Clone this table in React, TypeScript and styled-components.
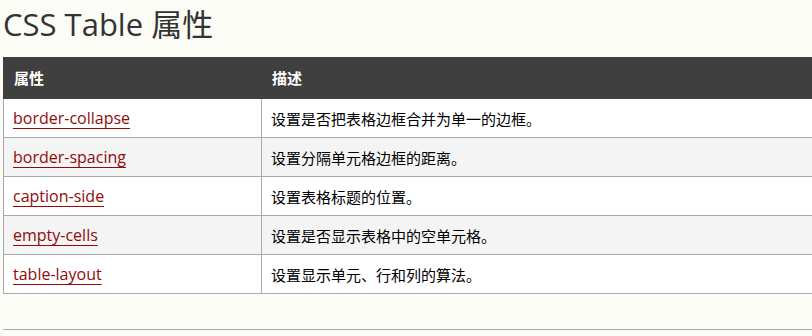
import React from 'react';
import styled, { createGlobalStyle } from 'styled-components';

const GlobalStyle = createGlobalStyle`
  body {
    margin: 0;
    background: #fcfcf7;
    font-family: "Open Sans", "Noto Sans CJK SC", sans-serif;
    overflow: hidden;
  }
`;

const Page = styled.div`
  padding: 0 0 0 3px;
  width: 860px;
`;

const Title = styled.h2`
  margin: 0;
  padding-top: 4px;
  height: 53px;
  font-size: 31px;
  font-weight: 400;
  line-height: 40px;
  color: #333;
`;

const Table = styled.table`
  width: 100%;
  border-collapse: collapse;
  font-size: 15px;
`;

const HeadCell = styled.th<{ $w?: number }>`
  background: #3f3f3f;
  color: #fff;
  font-weight: bold;
  text-align: left;
  height: 41px;
  padding: 0 10px;
  border: 1px solid #3f3f3f;
  border-top: none;
  ${(p) => (p.$w ? `width: ${p.$w}px;` : '')}
`;

const Row = styled.tr<{ $alt?: boolean }>`
  background: ${(p) => (p.$alt ? '#f4f4f4' : '#fff')};
`;

const Cell = styled.td<{ $w?: number }>`
  border: 1px solid #aaa;
  border-top: none;
  height: 38px;
  padding: 0 9px;
  color: #000;
  ${(p) => (p.$w ? `width: ${p.$w}px;` : '')}
`;

const PropLink = styled.a`
  color: #900b09;
  font-size: 16px;
  text-decoration: underline;
  text-underline-offset: 4px;
`;

const Rule = styled.hr`
  margin: 35px 0 0 0;
  border: none;
  border-top: 1px solid #aaa;
`;

const rows = [
  { name: 'border-collapse', desc: '设置是否把表格边框合并为单一的边框。' },
  { name: 'border-spacing', desc: '设置分隔单元格边框的距离。' },
  { name: 'caption-side', desc: '设置表格标题的位置。' },
  { name: 'empty-cells', desc: '设置是否显示表格中的空单元格。' },
  { name: 'table-layout', desc: '设置显示单元、行和列的算法。' },
];

const App: React.FC = () => {
  return (
    <Page>
      <GlobalStyle />
      <Title>CSS Table 属性</Title>
      <Table>
        <thead>
          <tr>
            <HeadCell $w={237}>属性</HeadCell>
            <HeadCell>描述</HeadCell>
          </tr>
        </thead>
        <tbody>
          {rows.map((r, i) => (
            <Row key={r.name} $alt={i % 2 === 1}>
              <Cell $w={237}>
                <PropLink href="#">{r.name}</PropLink>
              </Cell>
              <Cell>{r.desc}</Cell>
            </Row>
          ))}
        </tbody>
      </Table>
      <Rule />
    </Page>
  );
};

export default App;
